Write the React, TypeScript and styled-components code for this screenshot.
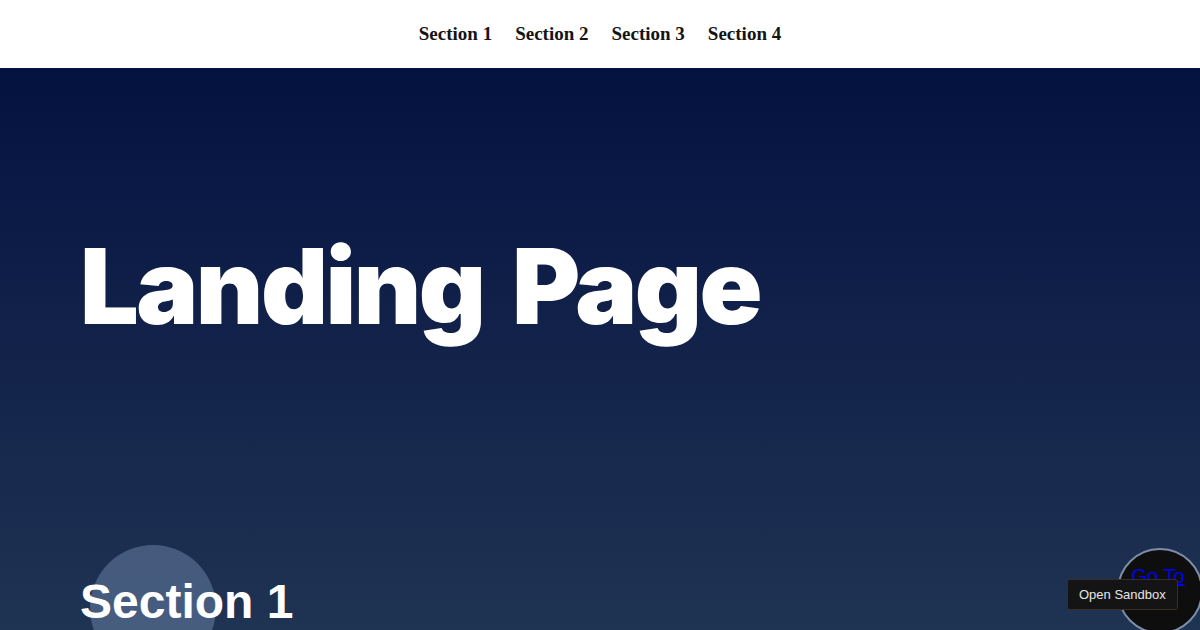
import React from 'react'
import styled, { createGlobalStyle } from 'styled-components'

const Global = createGlobalStyle`
  html, body {
    margin: 0;
    padding: 0;
    background: #1e3150;
    overflow: hidden;
  }
`

const Nav = styled.nav`
  height: 68px;
  background: #fff;
  display: flex;
  align-items: center;
  justify-content: center;
  gap: 23px;
`

const NavLink = styled.a`
  font-family: 'Liberation Serif', 'DejaVu Serif', serif;
  font-weight: 700;
  font-size: 19px;
  color: #141414;
  text-decoration: none;
  cursor: pointer;
`

const Hero = styled.main`
  height: 562px;
  box-sizing: border-box;
  overflow: hidden;
  padding: 166px 80px 0;
  background: linear-gradient(180deg, #041241 0%, #112149 45%, #1f3353 100%);
`

const Title = styled.h1`
  margin: 0;
  font-family: Inter, Lato, sans-serif;
  font-weight: 900;
  font-size: 104px;
  line-height: 1;
  letter-spacing: -2.5px;
  word-spacing: 10px;
  color: #fff;
`

const SectionTitle = styled.h2`
  position: relative;
  margin: 240px 0 0;
  font-family: 'Liberation Sans', Arial, sans-serif;
  font-weight: 700;
  font-size: 48px;
  line-height: 1;
  color: #fff;
  z-index: 0;

  &::before {
    content: '';
    position: absolute;
    left: 10px;
    top: -33px;
    width: 126px;
    height: 126px;
    border-radius: 50%;
    background: rgba(120, 145, 180, 0.45);
    z-index: -1;
  }
`

const GoTo = styled.div`
  position: fixed;
  right: -3px;
  bottom: -4px;
  width: 82px;
  height: 66px;
  padding-top: 16px;
  border-radius: 50%;
  background: #0e0e0f;
  border: 2px solid #7d8ea6;
  display: flex;
  justify-content: center;
`

const GoToLink = styled.a`
  font-family: 'Liberation Sans', Arial, sans-serif;
  font-size: 20px;
  color: #0000ee;
  text-decoration: underline;
  line-height: 1;
  margin-right: 4px;
`

const Tooltip = styled.div`
  position: fixed;
  left: 1067px;
  top: 579px;
  height: 31px;
  box-sizing: border-box;
  padding: 0 11px;
  display: flex;
  align-items: center;
  background: #141414;
  border: 1px solid #3b2c24;
  border-radius: 3px;
  font-family: 'Liberation Sans', Arial, sans-serif;
  font-size: 13px;
  color: #e6e6e6;
`

const App = () => {
  return (
    <>
      <Global />
      <Nav>
        {['Section 1', 'Section 2', 'Section 3', 'Section 4'].map((s) => (
          <NavLink key={s}>{s}</NavLink>
        ))}
      </Nav>
      <Hero>
        <Title>Landing Page</Title>
        <SectionTitle>Section 1</SectionTitle>
      </Hero>
      <GoTo>
        <GoToLink>Go To</GoToLink>
      </GoTo>
      <Tooltip>Open Sandbox</Tooltip>
    </>
  )
}

export default App
